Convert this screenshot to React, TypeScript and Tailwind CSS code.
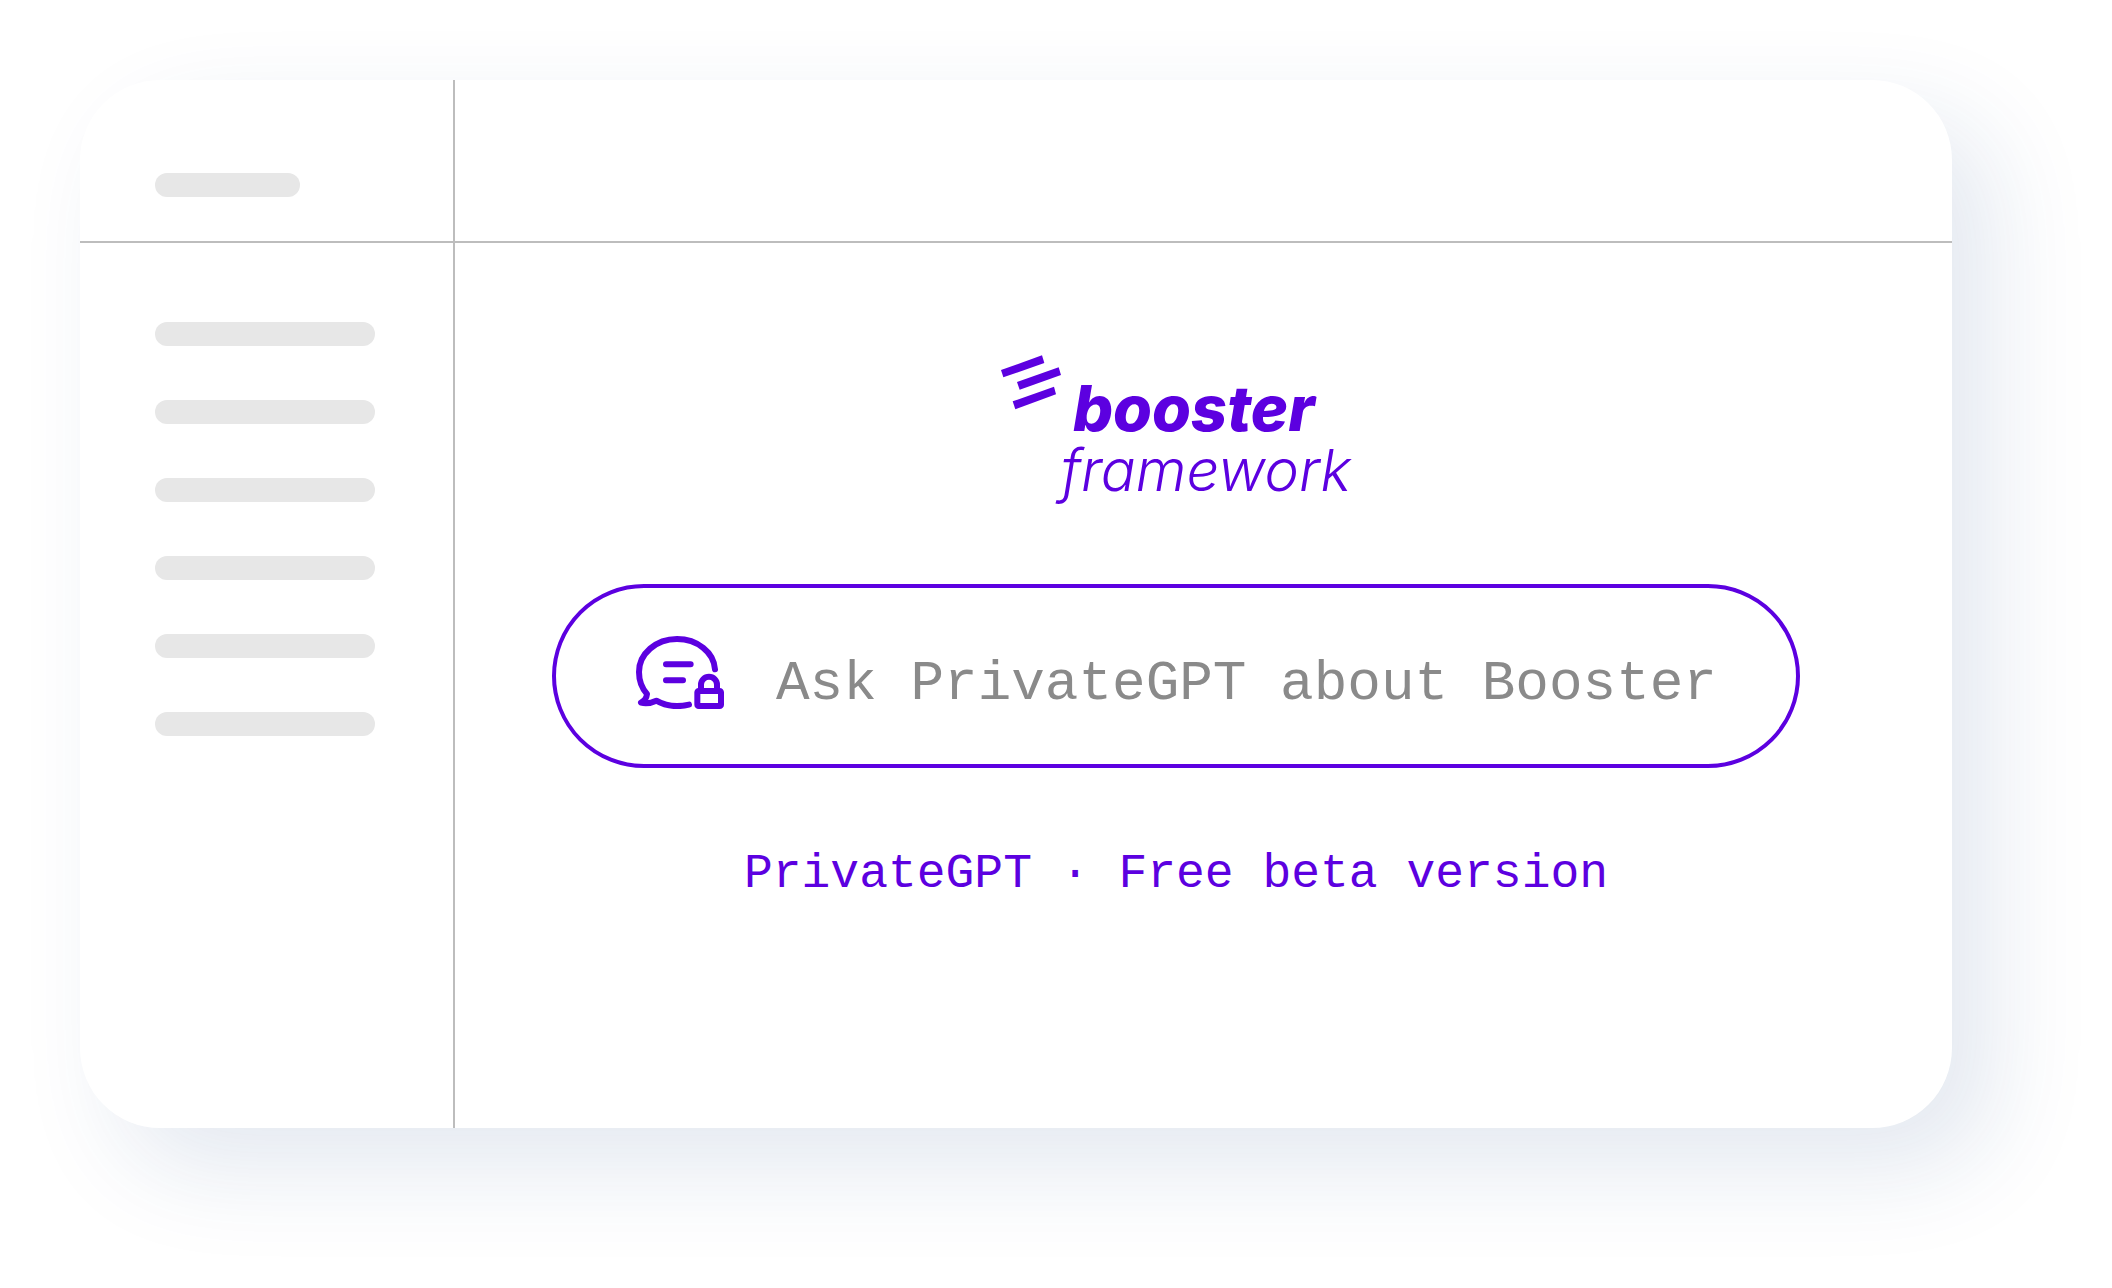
import { useState } from 'react'

const NAV_ROWS = [1, 2, 3, 4, 5, 6]

export default function App() {
  const [question, setQuestion] = useState('')

  return (
    <div className="flex min-h-screen bg-white pt-20 pr-40 pb-40 pl-20">
      <div className="grid flex-1 grid-cols-[375px_1fr] grid-rows-[163px_1fr] overflow-hidden rounded-[80px] bg-white shadow-[40px_40px_100px_rgba(22,63,130,0.12)]">
        {/* Top bar */}
        <div className="border-r-2 border-b-2 border-[#bdbdbd] pt-[93px] pl-[75px]">
          <div className="h-6 w-[145px] rounded-full bg-[#e7e7e7]" />
        </div>
        <header className="border-b-2 border-[#bdbdbd]" />

        {/* Sidebar placeholders */}
        <aside className="flex flex-col gap-[54px] border-r-2 border-[#bdbdbd] pt-[79px] pl-[75px]">
          {NAV_ROWS.map((row) => (
            <div key={row} className="h-6 w-[220px] rounded-full bg-[#e7e7e7]" />
          ))}
        </aside>

        <main className="flex flex-col items-center pt-28 pr-[152px] pl-[97px] text-[#5c00e0]">
          <Logo />

          <label className="mt-[83px] flex h-[184px] w-full items-start gap-[52px] rounded-full border-4 border-[#5c00e0] pt-12 pr-12 pl-20">
            <PrivateChatIcon />
            <input
              type="text"
              value={question}
              onChange={(e) => setQuestion(e.target.value)}
              placeholder="Ask PrivateGPT about Booster"
              aria-label="Ask PrivateGPT about Booster"
              className="h-24 min-w-0 flex-1 bg-transparent font-['Liberation_Mono',monospace] text-[56px] text-[#8a8a8a] outline-none placeholder:text-[#8a8a8a]"
            />
          </label>

          <p className="mt-[74px] font-['Liberation_Mono',monospace] text-5xl leading-[64px] whitespace-nowrap">
            PrivateGPT · Free beta version
          </p>
        </main>
      </div>
    </div>
  )
}

function Logo() {
  return (
    <div className="flex items-start font-['Inter',sans-serif] italic">
      <svg
        width="60"
        height="55"
        viewBox="60 47 180 165"
        fill="currentColor"
        aria-hidden
      >
        <path d="M60 92 183 48 190 71 67 114Z" />
        <path d="M108 128 233 84 240 107 116 151Z" />
        <path d="M95 186 219 142 225 165 103 210Z" />
      </svg>
      <div className="flex flex-col pt-[22px] leading-[62px]">
        <span className="pl-3 text-[63px] font-extrabold">booster</span>
        <span className="text-[58px] font-light">framework</span>
      </div>
    </div>
  )
}

function PrivateChatIcon() {
  return (
    <svg
      className="shrink-0"
      width="88"
      height="73"
      viewBox="288 197 264 219"
      fill="none"
      stroke="currentColor"
      strokeWidth="18"
      strokeLinecap="round"
      strokeLinejoin="round"
      aria-hidden
    >
      <path d="M525 297C522 246 472 206 411 206C348 206 297 250 297 305C297 331 306 354 321 371C320 381 314 391 303 397C318 401 334 398 349 391C378 408 412 411 447 403" />
      <path d="M378 282H452M378 330H429" />
      <rect x="472" y="362" width="71" height="45" rx="4" />
      <path d="M483 360V343a24 24 0 0 1 48 0V360" />
    </svg>
  )
}
